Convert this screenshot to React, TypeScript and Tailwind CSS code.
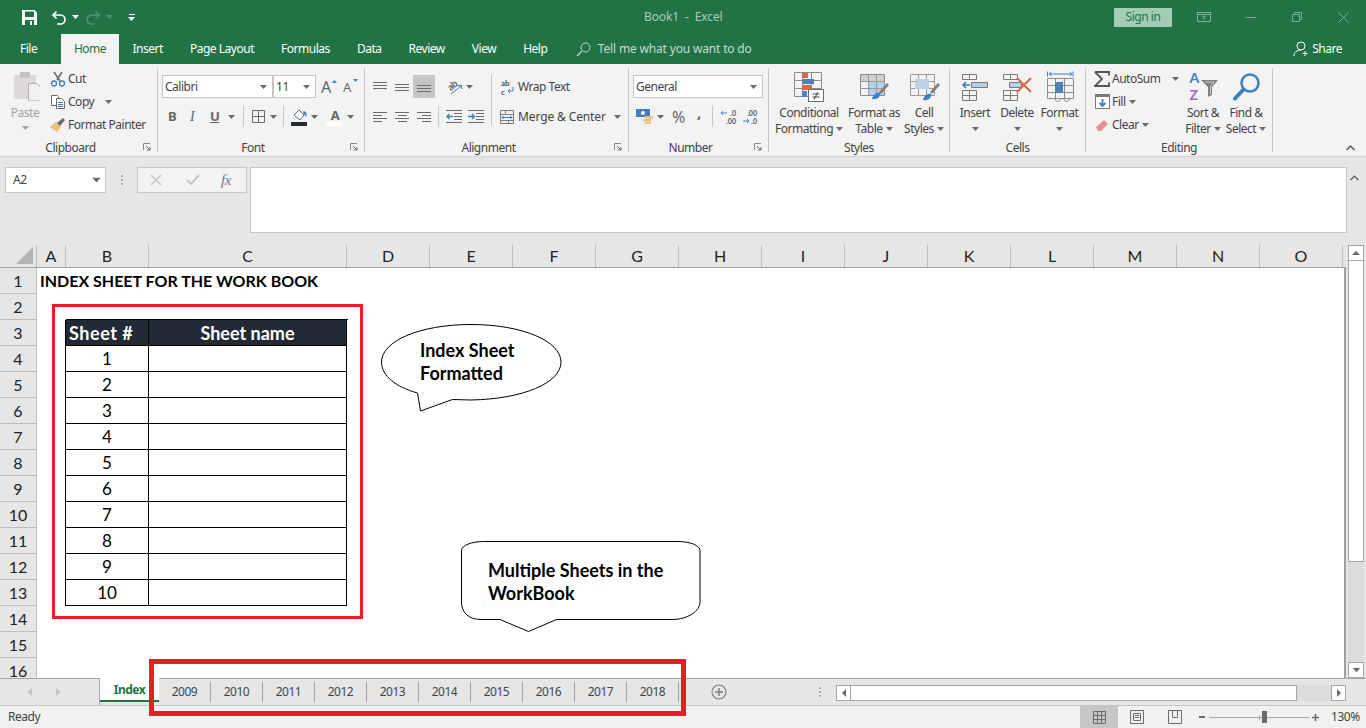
import type { ReactNode } from "react";

// small dropdown triangle used all over the ribbon
function Caret({ className = "", color = "#6b6b6b" }: { className?: string; color?: string }) {
  return (
    <svg width="7" height="4" viewBox="0 0 7 4" className={`shrink-0 ${className}`}>
      <path d="M0 0h7L3.5 4z" fill={color} />
    </svg>
  );
}

function Ico({ w, h = w, className = "", children }: { w: number; h?: number; className?: string; children: ReactNode }) {
  return (
    <svg width={w} height={h} viewBox={`0 0 ${w} ${h}`} fill="none" className={`block shrink-0 ${className}`}>
      {children}
    </svg>
  );
}

function Launcher() {
  return (
    <Ico w={8} className="absolute right-[6px] bottom-[1px]">
      <path d="M.5 7V.5H7" stroke="#8a8a8a" />
      <path d="M3 3l4 4M7 4v3H4" stroke="#6b6b6b" />
    </Ico>
  );
}

function Group({ label, width, launcher, children }: { label: string; width: string; launcher?: boolean; children: ReactNode }) {
  return (
    <div className={`relative flex h-[84px] shrink-0 flex-col border-r border-[#c6c6c6] ${width}`}>
      <div className="flex h-[76px] shrink-0">{children}</div>
      <div className={`text-center text-[12px] leading-[8px] text-[#444] ${launcher ? "pr-[16px]" : ""}`}>{label}</div>
      {launcher && <Launcher />}
    </div>
  );
}

function BigButton({ icon, lines, width, caretAlone }: { icon: ReactNode; lines: string[]; width: string; caretAlone?: boolean }) {
  return (
    <div className={`flex shrink-0 flex-col items-center text-[12px] leading-[16px] text-[#444] ${width}`}>
      <div className="flex h-[37px] items-center justify-center">{icon}</div>
      {lines.map((line, i) => (
        <div key={line} className="flex items-center gap-[3px] whitespace-nowrap">
          {line}
          {i === lines.length - 1 && !caretAlone && <Caret />}
        </div>
      ))}
      {caretAlone && (
        <div className="flex h-[16px] items-center">
          <Caret />
        </div>
      )}
    </div>
  );
}

function SmallRow({ icon, text, caret, caretGap = "ml-[3px]" }: { icon: ReactNode; text: string; caret?: boolean; caretGap?: string }) {
  return (
    <div className="flex h-[23px] items-center text-[12px] text-[#444]">
      <div className="flex w-[20px] shrink-0 justify-center">{icon}</div>
      <span className="whitespace-nowrap">{text}</span>
      {caret && <Caret className={caretGap} />}
    </div>
  );
}

function Lines({ rows, color = "#6b6b6b" }: { rows: [number, number, number][]; color?: string }) {
  return (
    <>
      {rows.map(([x, y, l]) => (
        <path key={`${x}-${y}`} d={`M${x} ${y + 0.5}h${l}`} stroke={color} />
      ))}
    </>
  );
}

function Select({ text, width }: { text: string; width: string }) {
  return (
    <div className={`flex h-[23px] items-center justify-between border border-[#c6c6c6] bg-white pl-[2px] pr-[5px] text-[12px] text-[#444] ${width}`}>
      <span>{text}</span>
      <Caret />
    </div>
  );
}

// increase / decrease decimal buttons
function Decimals({ top, bottom, arrow }: { top: string; bottom: string; arrow: ReactNode }) {
  return (
    <div className="relative h-[16px] w-[16px] shrink-0 font-['Lato',sans-serif] text-[7px] font-bold leading-[8px] tracking-normal text-[#555]">
      <div className="text-right">{top}</div>
      <div className="text-right">{bottom}</div>
      {arrow}
    </div>
  );
}

function TableIcon() {
  return (
    <Ico w={32} h={30}>
      <path d="M2.5 2.5h24v21h-24zM2.5 9.5h24M2.5 16.5h24M10.5 2.5v21M18.5 2.5v21" stroke="#8c8c8c" />
      <rect x="11" y="10" width="15" height="13" fill="#b7cfe8" />
      <rect x="3" y="3" width="23" height="6" fill="#cfcfcf" />
      <path d="M10.5 2.5v21M18.5 2.5v21M2.5 9.5h24M2.5 16.5h24" stroke="#9a9a9a" />
      <path d="M21 20l8-9 2 2-8 9z" fill="#808080" />
      <path d="M14 27c1-5 5-7 8-6 1 3-2 7-8 6z" fill="#3f7fc0" />
    </Ico>
  );
}

function CellStylesIcon() {
  return (
    <Ico w={32} h={30} className="ml-[2px]">
      <path d="M1.5 2.5h24v21h-24zM1.5 9.5h24M1.5 16.5h24M9.5 2.5v21M17.5 2.5v21" stroke="#9a9a9a" />
      <rect x="6" y="7" width="14" height="10" fill="#bcd2e9" />
      <path d="M21 20l8-9 2 2-8 9z" fill="#808080" />
      <path d="M14 28c1-5 5-7 8-6 1 3-2 7-8 6z" fill="#3f7fc0" />
    </Ico>
  );
}

function CondFormatIcon() {
  return (
    <Ico w={30}>
      <path d="M.5.5h27v24H.5zM.5 8.5h27M.5 16.5h27M8.5.5v24M17.5.5v24" stroke="#8c8c8c" />
      <rect x="8" y="1" width="6" height="5" fill="#d9673f" />
      <rect x="8" y="7" width="12" height="5" fill="#4d82b8" />
      <rect x="8" y="13" width="9" height="5" fill="#d9673f" />
      <rect x="8" y="19" width="5" height="6" fill="#4d82b8" />
      <rect x="14.5" y="17.5" width="15" height="12" fill="#fff" stroke="#6b6b6b" />
      <path d="M18.5 22h7M18.5 25h7M24 20l-4 7.5" stroke="#444" />
    </Ico>
  );
}

function InsertIcon() {
  return (
    <Ico w={28} h={28}>
      <path d="M1.5 1.5h14v5h-14zM8.5 1.5v5M1.5 17.5h14v10h-14zM1.5 22.5h14M8.5 17.5v10" stroke="#7a7a7a" />
      <path d="M10.5 9.5h16v5h-16zM18.5 9.5v5" stroke="#7a7a7a" />
      <rect x="11" y="10" width="15" height="4" fill="#b7cfe8" />
      <path d="M9 12H2M5 9l-3 3 3 3" stroke="#3f7fc0" strokeWidth="1.6" />
    </Ico>
  );
}

function DeleteIcon() {
  return (
    <Ico w={30} h={28}>
      <path d="M1.5 1.5h14v5h-14zM8.5 1.5v5M1.5 17.5h14v10h-14zM1.5 22.5h14M8.5 17.5v10" stroke="#7a7a7a" />
      <path d="M7.5 9.5h12v5h-12z" stroke="#7a7a7a" fill="#b7cfe8" />
      <path d="M15 5l14 14M29 5L15 19" stroke="#d9673f" strokeWidth="2" />
    </Ico>
  );
}

function FormatIcon() {
  return (
    <Ico w={28} h={32}>
      <path d="M1.5.5v5M27 .5v5M3 3h23M3 3l2.5-2M3 3l2.5 2M26 3l-2.5-2M26 3l-2.5 2" stroke="#3f7fc0" />
      <path d="M1.5 7.5h26v20h-26zM1.5 14.5h26M1.5 21.5h26M9.5 7.5v20M18.5 7.5v20" stroke="#8c8c8c" />
      <rect x="9" y="11" width="8" height="11" fill="#4d82b8" />
      <path d="M9 28c0 2 2 3 4 2l2-2M18 28c0 2 2 3 4 2l2-2" stroke="#8c8c8c" />
    </Ico>
  );
}

function SortIcon() {
  return (
    <div className="relative -mt-px h-[34px] w-[31px] font-['Lato',sans-serif] text-[14px] font-bold leading-[17px] tracking-normal">
      <div className="pl-[2px] text-[#3f7fc0]">A</div>
      <div className="pl-[2px] text-[#9b6bb8]">Z</div>
      <Ico w={18} h={18} className="absolute left-[13px] top-[10px]">
        <path d="M0 1h17l-6 7v8l-4 2V8z" fill="#7f7f7f" />
        <path d="M4 3h9l-3.500 4v8" stroke="#cfcfcf" />
      </Ico>
    </div>
  );
}

function FindIcon() {
  return (
    <Ico w={28}>
      <circle cx="18" cy="10" r="8.500" stroke="#3f7fc0" strokeWidth="2.500" />
      <path d="M11.500 16.500L3 25.500" stroke="#3f7fc0" strokeWidth="4" strokeLinecap="round" />
    </Ico>
  );
}

function Ribbon() {
  return (
    <div className="flex h-[93px] shrink-0 border-b border-[#d2d2d2] bg-[#f3f3f3] pt-[4px]">
      <Group label="Clipboard" width="w-[158px]" launcher>
        <div className="ml-[8px] flex w-[34px] flex-col items-center">
          <Ico w={30} h={30} className="mt-[3px]">
            <rect x="4" y="4" width="22" height="24" rx="1" fill="#dcd8dc" />
            <rect x="10" y="1" width="10" height="6" fill="#c5c1c5" />
            <path d="M18.500 12.500h8l5 4.500v13h-13z" fill="#f2f0f2" stroke="#b0acb0" />
          </Ico>
          <div className="mt-[4px] text-[12px] leading-[16px] text-[#a3a3a3]">Paste</div>
          <Caret className="mt-[5px]" color="#a3a3a3" />
        </div>
        <div className="ml-[6px] -mt-px flex flex-col">
          <SmallRow
            text="Cut"
            icon={
              <Ico w={16}>
                <path d="M4 1l6 9M12 1L7 9" stroke="#6b6b6b" strokeWidth="1.600" />
                <circle cx="4" cy="12.500" r="2.500" stroke="#3f7fc0" strokeWidth="1.300" />
                <circle cx="12" cy="12.500" r="2.500" stroke="#3f7fc0" strokeWidth="1.300" />
              </Ico>
            }
          />
          <SmallRow
            text="Copy"
            caret
            caretGap="ml-[11px]"
            icon={
              <Ico w={16}>
                <path d="M1.500 1.500h6l1 1v9h-7z" fill="#fff" stroke="#6b6b6b" />
                <path d="M6.500 4.500h5l3 3v7h-8z" fill="#fff" stroke="#6b6b6b" />
                <Lines color="#3f7fc0" rows={[[8, 8, 5], [8, 10, 5], [8, 12, 5]]} />
              </Ico>
            }
          />
          <SmallRow
            text="Format Painter"
            icon={
              <Ico w={16}>
                <path d="M0 10l6-5 5 5-4 5z" fill="#e8c27a" />
                <path d="M7 6l6-5 2 2-5 6z" fill="#6b6b6b" />
              </Ico>
            }
          />
        </div>
      </Group>

      <Group label="Font" width="w-[207px]" launcher>
        <div className="ml-[4px] flex flex-col pt-[7px]">
          <div className="flex h-[23px] items-center">
            <Select text="Calibri" width="w-[111px]" />
            <Select text="11" width="w-[43px]" />
            <div className="relative ml-[5px] w-[16px] text-[16px] leading-none text-[#666]">
              A
              <Ico w={5} h={3} className="absolute right-0 top-[1px]"><path d="M0 3l2.500-3L5 3z" fill="#3f7fc0" /></Ico>
            </div>
            <div className="relative ml-[6px] w-[15px] pt-[2px] text-[13px] leading-none text-[#666]">
              A
              <Ico w={5} h={3} className="absolute right-0 top-0"><path d="M0 0h5L2.500 3z" fill="#3f7fc0" /></Ico>
            </div>
          </div>
          <div className="mt-[7px] flex h-[23px] items-center text-[#666]">
            <span className="ml-[6px] w-[12px] text-[13px] font-bold">B</span>
            <span className="ml-[10px] w-[12px] font-['Liberation_Serif',serif] text-[14px] italic">I</span>
            <span className="ml-[8px] w-[12px] text-[13px] font-bold underline">U</span>
            <Caret className="ml-[6px]" />
            <div className="ml-[8px] h-[21px] w-px bg-[#c6c6c6]" />
            <Ico w={14} className="ml-[8px]">
              <path d="M.5.500h12v12H.5zM6.500.5v12M.5 6.500h12" stroke="#6b6b6b" />
            </Ico>
            <Caret className="ml-[4px]" />
            <div className="ml-[6px] h-[21px] w-px bg-[#c6c6c6]" />
            <Ico w={17} h={18} className="ml-[7px]">
              <path d="M3 7l5-5 5 5-4 5z" fill="#fff" stroke="#6b6b6b" />
              <path d="M13 3c3 1 3 4 2 6-1-2-2-3-3-4z" fill="#3f7fc0" />
              <rect x="0" y="14" width="16" height="4" fill="#222b35" />
            </Ico>
            <Caret className="ml-[3px]" />
            <div className="ml-[9px] flex w-[16px] flex-col items-center">
              <span className="text-[13px] font-bold leading-[14px]">A</span>
              <div className="h-[4px] w-[16px] bg-white" />
            </div>
            <Caret className="ml-[4px]" />
          </div>
        </div>
      </Group>

      <Group label="Alignment" width="w-[264px]" launcher>
        <div className="ml-[8px] flex flex-col pt-[7px]">
          <div className="flex h-[23px] items-center">
            <Ico w={14}><Lines rows={[[0, 2, 14], [0, 5, 14], [0, 8, 14]]} /></Ico>
            <Ico w={14} className="ml-[8px]"><Lines rows={[[0, 4, 14], [0, 7, 14], [0, 10, 14]]} /></Ico>
            <div className="ml-[4px] flex h-[23px] w-[22px] items-end justify-center bg-[#c6c6c6] pb-[4px]">
              <Ico w={14} h={9}><Lines rows={[[0, 0, 14], [0, 3, 14], [0, 6, 14]]} /></Ico>
            </div>
            <div className="relative ml-[12px] h-[16px] w-[16px] shrink-0 font-['Lato',sans-serif]">
              <span className="absolute left-0 top-[1px] -rotate-[40deg] text-[10px] font-bold leading-none text-[#666]">ab</span>
              <Ico w={16} className="absolute left-0 top-0">
                <path d="M4 15l10-8M10.500 6.500h4v3.500" stroke="#3f7fc0" />
              </Ico>
            </div>
            <Caret className="ml-[3px]" />
          </div>
          <div className="mt-[7px] flex h-[23px] items-center">
            <Ico w={14}><Lines rows={[[0, 2, 14], [0, 5, 9], [0, 8, 14], [0, 11, 9]]} /></Ico>
            <Ico w={14} className="ml-[8px]"><Lines rows={[[0, 2, 14], [3, 5, 9], [0, 8, 14], [3, 11, 9]]} /></Ico>
            <Ico w={14} className="ml-[8px]"><Lines rows={[[0, 2, 14], [5, 5, 9], [0, 8, 14], [5, 11, 9]]} /></Ico>
            <div className="ml-[7px] h-[21px] w-px bg-[#c6c6c6]" />
            <Ico w={16} className="ml-[7px]">
              <Lines rows={[[0, 1, 16], [8, 4, 8], [8, 7, 8], [8, 10, 8], [0, 13, 16]]} />
              <path d="M7 7.500H1M3.500 5l-2.500 2.500L3.500 10" stroke="#3f7fc0" strokeWidth="1.400" />
            </Ico>
            <Ico w={16} className="ml-[6px]">
              <Lines rows={[[0, 1, 16], [8, 4, 8], [8, 7, 8], [8, 10, 8], [0, 13, 16]]} />
              <path d="M0 7.500h6M4 5l2.500 2.500L4 10" stroke="#3f7fc0" strokeWidth="1.400" />
            </Ico>
          </div>
        </div>
        <div className="ml-[7px] mt-[7px] h-[50px] w-px bg-[#c6c6c6]" />
        <div className="ml-[7px] flex flex-col pt-[7px]">
          <div className="flex h-[23px] items-center text-[12px] text-[#444]">
            <div className="relative ml-[2px] h-[16px] w-[15px] shrink-0 font-['Lato',sans-serif] text-[8px] font-bold leading-[9px] tracking-normal text-[#555]">
              <div>ab</div>
              <div>c</div>
              <Ico w={7} h={7} className="absolute left-[6px] top-[8px]">
                <path d="M6 0v4H1M3 2L1 4l2 2" stroke="#3f7fc0" />
              </Ico>
            </div>
            <span className="ml-[2px] whitespace-nowrap">Wrap Text</span>
          </div>
          <div className="mt-[7px] flex h-[23px] items-center text-[12px] text-[#444]">
            <Ico w={16}>
              <path d="M1.500 1.500h13v13h-13zM1.500 5.500h13M1.500 11.500h13M6.500 1.500v3M9.500 12v2.500" stroke="#7a7a7a" />
              <path d="M3 8.500h10M4.500 7l-1.500 1.500L4.500 10M11.500 7l1.500 1.500L11.500 10" stroke="#3f7fc0" />
            </Ico>
            <span className="ml-[3px] whitespace-nowrap tracking-[-0.01em]">Merge &amp; Center</span>
            <Caret className="ml-[8px]" />
          </div>
        </div>
      </Group>

      <Group label="Number" width="w-[140px]" launcher>
        <div className="ml-[4px] flex flex-col pt-[7px]">
          <Select text="General" width="w-[130px]" />
          <div className="mt-[7px] flex h-[23px] items-center text-[#666]">
            <Ico w={17} className="ml-[3px]">
              <rect x="0" y="1" width="14" height="8" fill="#3f7fc0" />
              <circle cx="7" cy="5" r="2" fill="#fff" />
              <rect x="9" y="8" width="8" height="2.500" fill="#e8c27a" />
              <rect x="7" y="11" width="8" height="2.500" fill="#e8c27a" />
              <rect x="9" y="14" width="6" height="2" fill="#e8c27a" />
            </Ico>
            <Caret className="ml-[4px]" />
            <span className="ml-[8px] w-[14px] text-[16px]">%</span>
            <span className="ml-[11px] w-[5px] pb-[8px] text-[15px] font-bold leading-none">,</span>
            <div className="ml-[10px] h-[21px] w-px bg-[#c6c6c6]" />
            <div className="ml-[7px]">
              <Decimals
                top=".0"
                bottom=".00"
                arrow={
                  <Ico w={7} h={6} className="absolute left-0 top-px">
                    <path d="M7 3H1M3 1L1 3l2 2" stroke="#3f7fc0" />
                  </Ico>
                }
              />
            </div>
            <div className="ml-[5px]">
              <Decimals
                top=".00"
                bottom=".0"
                arrow={
                  <Ico w={7} h={6} className="absolute left-[2px] top-[9px]">
                    <path d="M0 3h6M4 1l2 2-2 2" stroke="#3f7fc0" />
                  </Ico>
                }
              />
            </div>
          </div>
        </div>
      </Group>

      <Group label="Styles" width="w-[181px]">
        <BigButton width="w-[80px]" lines={["Conditional", "Formatting"]} icon={<CondFormatIcon />} />
        <BigButton width="w-[50px]" lines={["Format as", "Table"]} icon={<TableIcon />} />
        <BigButton width="w-[50px]" lines={["Cell", "Styles"]} icon={<CellStylesIcon />} />
      </Group>

      <Group label="Cells" width="w-[136px]">
        <BigButton width="w-[50px]" lines={["Insert"]} caretAlone icon={<InsertIcon />} />
        <BigButton width="w-[34px]" lines={["Delete"]} caretAlone icon={<DeleteIcon />} />
        <BigButton width="w-[51px]" lines={["Format"]} caretAlone icon={<FormatIcon />} />
      </Group>

      <Group label="Editing" width="w-[187px]">
        <div className="ml-[6px] -mt-px flex h-[70px] w-[92px] shrink-0 flex-col">
          <SmallRow
            text="AutoSum"
            caret
            caretGap="ml-[11px]"
            icon={
              <Ico w={16}>
                <path d="M1 1h14v3.500M1 1l7 7-7 7h14v-3.500" stroke="#555" strokeWidth="1.800" />
              </Ico>
            }
          />
          <SmallRow
            text="Fill"
            caret
            icon={
              <Ico w={15}>
                <rect x=".5" y=".5" width="14" height="14" fill="#fff" stroke="#7a7a7a" />
                <rect x="1" y="1" width="13" height="2" fill="#7a7a7a" />
                <path d="M7.500 5v7M4.500 9l3 3 3-3" stroke="#3f7fc0" strokeWidth="1.800" />
              </Ico>
            }
          />
          <SmallRow
            text="Clear"
            caret
            icon={
              <Ico w={14}>
                <path d="M1 9l8-7 4 4-7 7H3z" fill="#e8909e" />
              </Ico>
            }
          />
        </div>
        <BigButton width="w-[38px]" lines={["Sort &", "Filter"]} icon={<SortIcon />} />
        <BigButton width="w-[48px]" lines={["Find &", "Select"]} icon={<FindIcon />} />
      </Group>

      <div className="flex flex-1 items-end justify-end pb-[5px] pr-[11px]">
        <Ico w={9} h={6}>
          <path d="M.5 5l4-4 4 4" stroke="#555" strokeWidth="1.400" />
        </Ico>
      </div>
    </div>
  );
}

function TitleBar() {
  return (
    <div className="flex h-[34px] shrink-0 items-center bg-[#217346] text-[12px]">
      <Ico w={15} className="ml-[22px]">
        <path d="M0 0h12.500L15 2.500V15H0z" fill="#fff" />
        <rect x="3" y="1.500" width="9" height="5.500" fill="#217346" />
        <rect x="3" y="10" width="9" height="5" fill="#217346" />
        <rect x="8" y="11" width="2" height="4" fill="#fff" />
      </Ico>
      <Ico w={15} className="ml-[14px]">
        <path d="M2 5h7.500a4.500 4.500 0 0 1 0 9H6M5.500 1.500L2 5l3.500 3.500" stroke="#fff" strokeWidth="1.700" />
      </Ico>
      <Caret className="ml-[6px]" color="#fff" />
      <Ico w={15} className="ml-[7px]">
        <path d="M13 5H5.500a4.500 4.500 0 0 0 0 9H9M9.500 1.500L13 5 9.500 8.500" stroke="#4f9170" strokeWidth="1.700" />
      </Ico>
      <Caret className="ml-[5px]" color="#4f9170" />
      <div className="ml-[15px] flex flex-col items-center gap-[2px]">
        <div className="h-px w-[6px] bg-white" />
        <Caret color="#fff" />
      </div>
      <div className="ml-[509px] w-[470px] tracking-[-0.01em] text-[#a6cdb8]">Book1&nbsp; -&nbsp; Excel</div>
      <div className="flex h-[19px] w-[58px] items-center justify-center rounded-[1px] bg-[#a2cdb4] text-[#217346]">Sign in</div>
      <Ico w={14} h={10} className="ml-[25px]">
        <path d="M.5.500h13v9H.5zM.5 2.500h13M7 8V4M5 5.500L7 3.500l2 2" stroke="#7fb096" />
      </Ico>
      <div className="ml-[35px] h-px w-[10px] bg-[#7fb096]" />
      <Ico w={10} className="ml-[36px]">
        <path d="M.5 2.500h7v7h-7zM2.500 2.500v-2h7v7h-2" stroke="#7fb096" />
      </Ico>
      <Ico w={11} className="ml-[36px]">
        <path d="M.5.500l10 10M10.500.500l-10 10" stroke="#7fb096" />
      </Ico>
    </div>
  );
}

function TabStrip() {
  const tabs = ["Insert", "Page Layout", "Formulas", "Data", "Review", "View", "Help"];
  return (
    <div className="flex h-[30px] shrink-0 items-stretch bg-[#217346] text-[12px] text-white">
      <div className="flex w-[61px] items-center pl-[20px]">File</div>
      <div className="flex w-[58px] items-center justify-center bg-[#f3f3f3] text-[#217346]">Home</div>
      {tabs.map((tab) => (
        <div key={tab} className="flex items-center px-[13.5px] whitespace-nowrap">
          {tab}
        </div>
      ))}
      <div className="ml-[15px] flex items-center tracking-[-0.014em] text-[#c3dccf]">
        <Ico w={15} className="mr-[7px]">
          <circle cx="9.500" cy="5.500" r="4.500" stroke="#c3dccf" />
          <path d="M6 9l-5 5" stroke="#c3dccf" strokeWidth="1.300" />
        </Ico>
        Tell me what you want to do
      </div>
      <div className="ml-auto flex items-center pr-[24px]">
        <Ico w={16} className="mr-[3px]">
          <circle cx="8" cy="5" r="4" stroke="#fff" />
          <path d="M1 15c0-4 3-6 7-6M12 10v5M9.500 12.500h5" stroke="#fff" />
        </Ico>
        Share
      </div>
    </div>
  );
}

function FormulaBar() {
  return (
    <div className="flex h-[88px] shrink-0 items-start bg-[#e6e6e6] pt-[10px] text-[#444]">
      <div className="ml-[5px] flex h-[26px] w-[101px] items-center justify-between border border-[#c6c6c6] bg-white pl-[7px] pr-[5px] text-[12px]">
        A2
        <Caret className="scale-125" />
      </div>
      <div className="ml-[15px] mt-[8px] flex flex-col gap-[2px]">
        <div className="h-[2px] w-[2px] bg-[#b0b0b0]" />
        <div className="h-[2px] w-[2px] bg-[#b0b0b0]" />
        <div className="h-[2px] w-[2px] bg-[#b0b0b0]" />
      </div>
      <div className="ml-[14px] flex h-[26px] w-[110px] items-center border border-[#c6c6c6] bg-[#f3f3f3]">
        <Ico w={12} className="ml-[12px]">
          <path d="M1 1l10 10M11 1L1 11" stroke="#c4c4c4" strokeWidth="1.500" />
        </Ico>
        <Ico w={14} className="ml-[24px]">
          <path d="M1 7l4 4 8-9" stroke="#c4c4c4" strokeWidth="2" />
        </Ico>
        <span className="ml-[21px] font-['Liberation_Serif',serif] text-[15px] italic text-[#777]">fx</span>
      </div>
      <div className="ml-[3px] h-[66px] w-[1097px] border border-[#c6c6c6] bg-white" />
      <Ico w={9} h={6} className="ml-[3px] mt-[8px]">
        <path d="M.5 5l4-4 4 4" stroke="#555" strokeWidth="1.200" />
      </Ico>
    </div>
  );
}

function ColumnHeaders() {
  const cols: [string, string][] = [
    ["A", "w-[29px]"], ["B", "w-[83px]"], ["C", "w-[198px]"], ["D", "w-[83px]"], ["E", "w-[83px]"],
    ["F", "w-[83px]"], ["G", "w-[83px]"], ["H", "w-[83px]"], ["I", "w-[83px]"], ["J", "w-[83px]"],
    ["K", "w-[83px]"], ["L", "w-[83px]"], ["M", "w-[83px]"], ["N", "w-[83px]"], ["O", "w-[83px]"],
  ];
  return (
    <div className="flex h-[23px] shrink-0 border-b border-[#9f9f9f] bg-[#e6e6e6] font-['Lato',sans-serif] text-[16px] text-[#222]">
      <div className="flex w-[37px] shrink-0 items-end justify-end border-r border-[#bdbdbd] pb-[3px] pr-[3px]">
        <Ico w={17}>
          <path d="M17 0v17H0z" fill="#b4b4b4" />
        </Ico>
      </div>
      {cols.map(([name, width]) => (
        <div key={name} className={`flex shrink-0 items-center justify-center border-r border-[#bdbdbd] ${width}`}>
          {name}
        </div>
      ))}
    </div>
  );
}

// row number -> what sits in B and C
function SheetRow({ n }: { n: number }) {
  const isHead = n === 3;
  const inTable = n >= 4 && n <= 13;
  const above = n === 2;
  return (
    <div className="flex h-[26px] shrink-0">
      <div className="flex w-[37px] shrink-0 items-center justify-center border-r border-b border-[#bdbdbd] bg-[#e6e6e6] text-[16px] text-[#222]">{n}</div>
      {n === 1 && (
        <div className="flex items-center whitespace-nowrap pl-[3px] text-[16px] font-bold text-black">INDEX SHEET FOR THE WORK BOOK</div>
      )}
      {n > 1 && <div className={`h-[26px] w-[29px] shrink-0 ${isHead || inTable ? "border-r border-black" : ""}`} />}
      {above && <div className="h-[26px] w-[282px] shrink-0 border-b border-black" />}
      {isHead && (
        <>
          <div className="flex w-[83px] shrink-0 items-center border-r border-b border-black bg-[#222b35] pl-[3px] pt-px text-[18px] font-bold tracking-[0.03em] text-white">Sheet #</div>
          <div className="flex w-[198px] shrink-0 items-center justify-center border-r border-b border-black bg-[#222b35] pt-px text-[18px] font-bold text-white">Sheet name</div>
        </>
      )}
      {inTable && (
        <>
          <div className="flex w-[83px] shrink-0 items-center justify-center border-r border-b border-black pt-px text-[17px] text-black">{n - 3}</div>
          <div className="w-[198px] shrink-0 border-r border-b border-black" />
        </>
      )}
    </div>
  );
}

function Sheet() {
  const rows = Array.from({ length: 16 }, (_, i) => i + 1);
  return (
    <div className="relative flex h-[410px] flex-col overflow-hidden border-r-2 border-[#9f9f9f] bg-white font-['Lato',sans-serif]">
      {rows.map((n) => (
        <SheetRow key={n} n={n} />
      ))}

      <div className="absolute left-[52px] top-[36px] h-[315px] w-[311px] border-[3px] border-[#ed1c24]" />

      <svg width="190" height="92" viewBox="0 0 190 92" fill="none" className="absolute left-[376px] top-[52px]">
        <path
          d="M41.500 73C20 67 5.500 56 5.500 42 5.500 21 44 4.500 95 4.500s90 16.500 90 37.500c0 21-38 37-90 38-6 0-12-.5-18.500-.5L44.500 91z"
          stroke="#000"
          fill="#fff"
        />
      </svg>
      <div className="absolute left-[420px] top-[71px] text-[18px] font-bold leading-[23px] text-black">
        Index Sheet
        <br />
        Formatted
      </div>

      <svg width="250" height="100" viewBox="0 0 250 100" fill="none" className="absolute left-[456px] top-[270px]">
        <path
          d="M27.500 3.500H222c12 0 22 4 22 9V64c0 9-12 17.500-28 17.500H100.500L72.500 93.500 44 81.500H25C12 81.500 5.500 74 5.500 64V12.500c0-5 10-9 22-9z"
          stroke="#000"
          fill="#fff"
        />
      </svg>
      <div className="absolute left-[488px] top-[291px] whitespace-nowrap text-[18px] font-bold leading-[23px] text-black">
        Multiple Sheets in the
        <br />
        WorkBook
      </div>
    </div>
  );
}

function VScroll() {
  return (
    <div className="flex w-[20px] shrink-0 justify-center bg-[#e6e6e6]">
      <div className="flex w-[16px] flex-col bg-[#dcdcdc]">
        <div className="flex h-[16px] items-center justify-center border border-[#a6a6a6] bg-white">
          <Ico w={8} h={4}><path d="M0 4h8L4 0z" fill="#6b6b6b" /></Ico>
        </div>
        <div className="h-[301px] border-x border-b border-[#a6a6a6] bg-white" />
        <div className="mt-auto flex h-[16px] items-center justify-center border border-[#a6a6a6] bg-white">
          <Caret className="scale-110" />
        </div>
      </div>
    </div>
  );
}

function SheetTabs() {
  const years = ["2009", "2010", "2011", "2012", "2013", "2014", "2015", "2016", "2017", "2018"];
  return (
    <div className="flex h-[28px] shrink-0 border-b border-[#c6c6c6] bg-[#e6e6e6] text-[12px] text-[#444]">
      <div className="flex w-[100px] shrink-0 items-center border-t border-r border-[#a6a6a6] pl-[27px]">
        <Ico w={5} h={8}><path d="M5 0v8L0 4z" fill="#c4c4c4" /></Ico>
        <Ico w={5} h={8} className="ml-[24px]"><path d="M0 0v8l5-4z" fill="#c4c4c4" /></Ico>
      </div>
      <div className="flex h-[24px] w-[59px] shrink-0 items-center justify-center border-b-2 border-[#217346] bg-white pt-[2px] text-[12px] font-bold text-[#217346]">Index</div>
      <div className="flex flex-1 items-start border-t border-[#a6a6a6]">
        <div className="flex h-[23px] items-end">
          {years.map((year) => (
            <div key={year} className="flex h-[20px] w-[52px] items-center justify-center border-r border-[#a0a0a0]">
              {year}
            </div>
          ))}
        </div>
        <Ico w={16} className="ml-[32px] mt-[5px]">
          <circle cx="8" cy="8" r="7" stroke="#7f7f7f" strokeWidth="1.200" />
          <path d="M8 4v8M4 8h8" stroke="#7f7f7f" strokeWidth="1.500" />
        </Ico>
        <div className="ml-[92px] mt-[8px] flex flex-col gap-[2px]">
          <div className="h-[2px] w-[2px] bg-[#b0b0b0]" />
          <div className="h-[2px] w-[2px] bg-[#b0b0b0]" />
          <div className="h-[2px] w-[2px] bg-[#b0b0b0]" />
        </div>
        <div className="ml-[15px] mt-[6px] flex h-[16px] w-[510px] bg-[#dcdcdc]">
          <div className="flex h-[16px] w-[15px] items-center justify-center border border-[#a6a6a6] bg-white">
            <Ico w={4} h={8}><path d="M4 0v8L0 4z" fill="#6b6b6b" /></Ico>
          </div>
          <div className="h-[16px] w-[446px] border-y border-r border-[#a6a6a6] bg-white" />
          <div className="ml-auto flex h-[16px] w-[15px] items-center justify-center border border-[#a6a6a6] bg-white">
            <Ico w={4} h={8}><path d="M0 0v8l4-4z" fill="#6b6b6b" /></Ico>
          </div>
        </div>
      </div>
    </div>
  );
}

function StatusBar() {
  return (
    <div className="flex h-[22px] shrink-0 items-stretch bg-[#f1f1f1] text-[12px] text-[#444]">
      <div className="flex items-center pl-[8px]">Ready</div>
      <div className="ml-auto flex w-[38px] items-center justify-center bg-[#c6c6c6]">
        <Ico w={13}>
          <path d="M.5.500h12v12H.5zM4.500.5v12M8.500.5v12M.5 4.500h12M.5 8.500h12" stroke="#6b6b6b" />
        </Ico>
      </div>
      <div className="ml-[12px] flex items-center">
        <Ico w={14}>
          <path d="M.5.500h13v13H.5zM3.500 3.500h7v7h-7zM5 5.500h4M5 7.500h4" stroke="#6b6b6b" />
        </Ico>
      </div>
      <div className="ml-[24px] flex items-center">
        <Ico w={14}>
          <path d="M.5.500h13v13H.5zM4.500.5v7h5v-7" stroke="#6b6b6b" />
        </Ico>
      </div>
      <div className="ml-[17px] flex items-center">
        <div className="h-[2px] w-[6px] bg-[#6b6b6b]" />
        <div className="relative ml-[4px] h-px w-[100px] bg-[#a6a6a6]">
          <div className="absolute left-[53px] top-[-6px] h-[12px] w-[5px] bg-[#6b6b6b]" />
          <div className="absolute left-[50px] top-[-2px] h-[5px] w-px bg-[#a6a6a6]" />
        </div>
        <Ico w={7} className="ml-[3px]">
          <path d="M3.500 0v7M0 3.500h7" stroke="#6b6b6b" strokeWidth="1.600" />
        </Ico>
      </div>
      <div className="ml-[12px] flex w-[28px] items-center whitespace-nowrap">130%</div>
      <div className="w-[7px]" />
    </div>
  );
}

export default function App() {
  return (
    <div className="relative flex h-[728px] w-[1366px] flex-col overflow-hidden font-['Noto_Sans',sans-serif] tracking-[-0.03em]">
      <TitleBar />
      <TabStrip />
      <Ribbon />
      <FormulaBar />
      <div className="flex h-[433px] shrink-0">
        <div className="flex w-[1346px] shrink-0 flex-col tracking-normal">
          <ColumnHeaders />
          <Sheet />
        </div>
        <VScroll />
      </div>
      <SheetTabs />
      <StatusBar />
      <div className="absolute left-[149px] top-[659px] h-[57px] w-[537px] border-[5px] border-[#ed1c24]" />
    </div>
  );
}
